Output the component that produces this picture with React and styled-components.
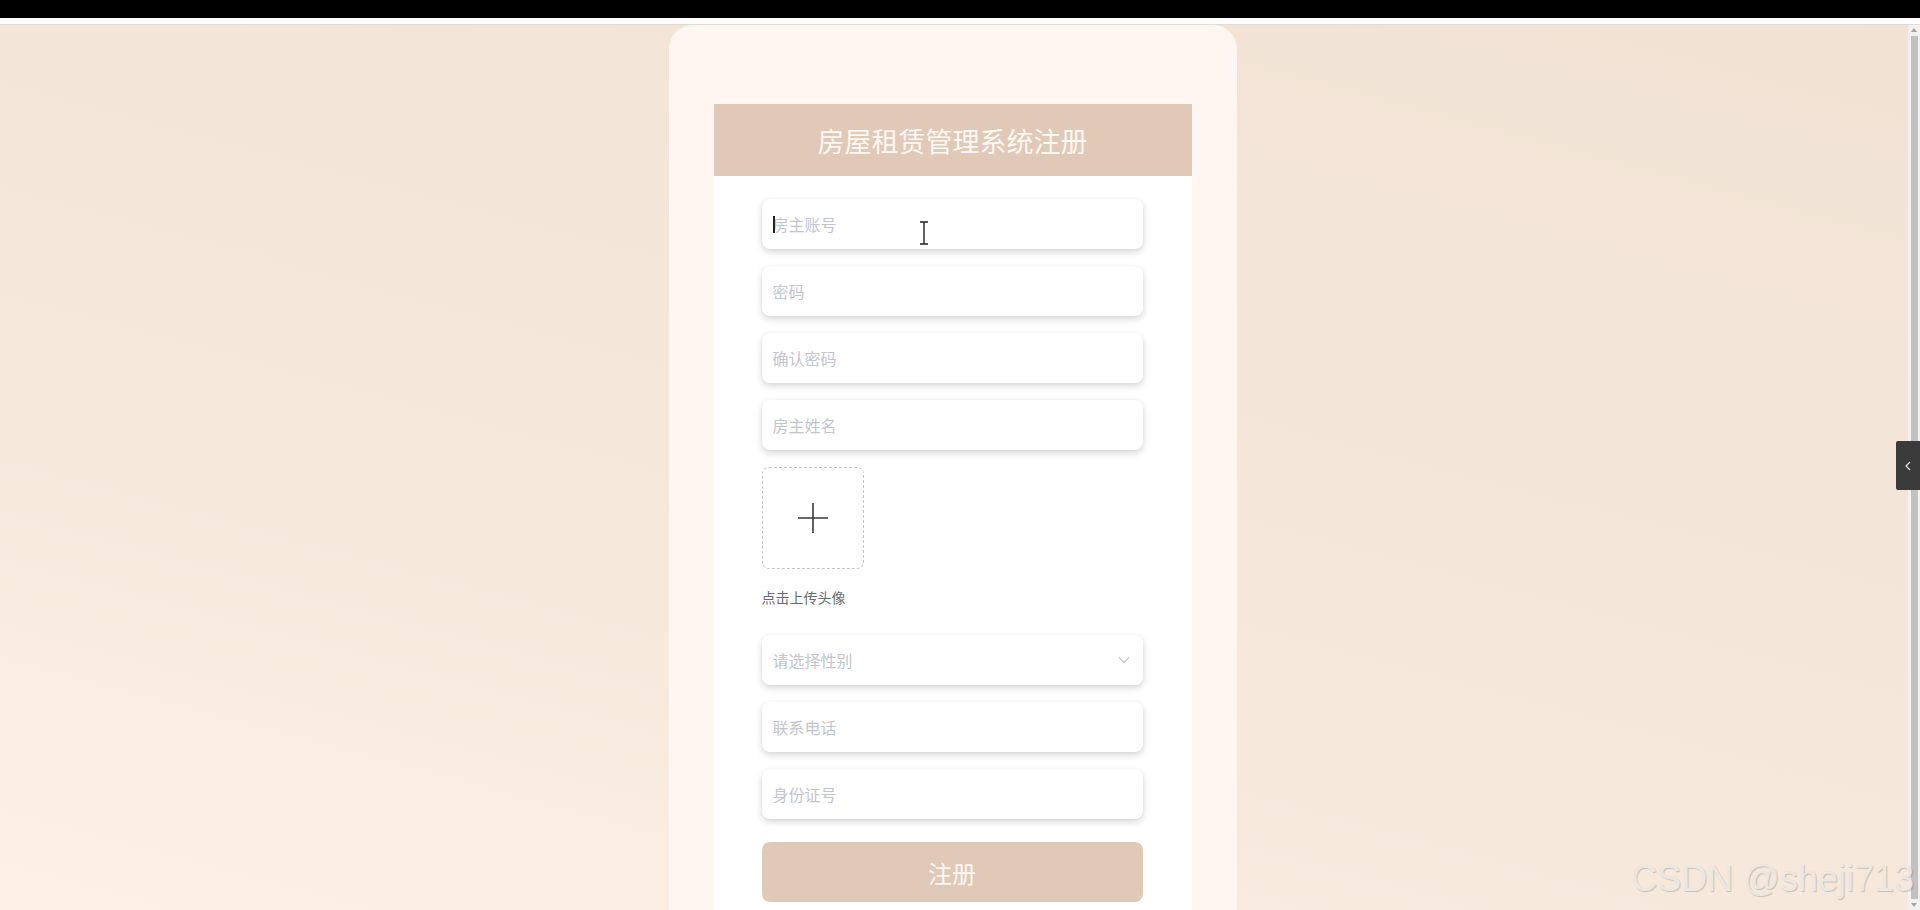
import React from "react";
import styled, { createGlobalStyle } from "styled-components";

const Global = createGlobalStyle`
  html, body { margin: 0; padding: 0; overflow: hidden; }
  body { font-family: "Noto Sans CJK SC", "Noto Sans", sans-serif; }
  * { box-sizing: border-box; }
`;

const Page = styled.div`
  position: relative;
  width: 1920px;
  height: 910px;
  display: flex;
  flex-direction: column;
  overflow: hidden;
`;

const TopBar = styled.div`
  height: 18px;
  background: #000;
  flex: none;
`;

const Strip = styled.div`
  height: 7px;
  background: #fdfdfd;
  border-bottom: 1px solid #e2dcd6;
  flex: none;
`;

const Body = styled.div`
  flex: 1;
  display: flex;
  min-height: 0;
`;

const Viewport = styled.div`
  flex: 1;
  display: flex;
  justify-content: center;
  align-items: flex-start;
  overflow: hidden;
  padding-right: 3px;
  background: linear-gradient(15deg, #fdf1e6 0%, #f6e8db 35%, #f3e5d8 65%, #f1e2d4 100%);
`;

const Card = styled.div`
  width: 568px;
  min-height: 940px;
  padding: 79px 45px 0;
  background: #fdf6f1;
  border-radius: 24px;
  display: flex;
  flex-direction: column;
`;

const Header = styled.div`
  height: 72px;
  background: #e0c9b6;
  display: flex;
  align-items: center;
  justify-content: center;
`;

const Title = styled.h1`
  margin: 0;
  font-size: 27px;
  font-weight: 400;
  color: #fdf8f3;
  font-family: "Noto Sans CJK SC", sans-serif;
`;

const Panel = styled.div`
  flex: 1;
  background: #fff;
  padding: 23px 49px 40px 48px;
  display: flex;
  flex-direction: column;
  gap: 17px;
`;

const Field = styled.div`
  position: relative;
  height: 50px;
  border-radius: 8px;
  background: #fff;
  box-shadow: 0 3px 7px rgba(0, 0, 0, 0.16), 0 0 3px rgba(0, 0, 0, 0.04);
  display: flex;
  align-items: center;
`;

const Input = styled.input`
  flex: 1;
  height: 100%;
  border: none;
  outline: none;
  background: transparent;
  padding: 0 11px;
  font-size: 16px;
  font-family: "Noto Sans CJK SC", sans-serif;
  color: #333;
  &::placeholder { color: #c3c5cc; }
`;

const Caret = styled.span`
  position: absolute;
  left: 11px;
  top: 17px;
  width: 2px;
  height: 17px;
  background: #222;
`;

const Pointer = styled.svg`
  position: absolute;
  left: 157px;
  top: 22px;
  pointer-events: none;
`;

const Chevron = styled.svg`
  margin-right: 13px;
  flex: none;
`;

const UploadGroup = styled.div`
  display: flex;
  flex-direction: column;
  align-items: flex-start;
  margin-bottom: 11px;
`;

const UploadBox = styled.div`
  width: 102px;
  height: 102px;
  border: 1px dashed #c0c4cc;
  border-radius: 7px;
  display: flex;
  align-items: center;
  justify-content: center;
  background: #fff;
`;

const Caption = styled.div`
  margin-top: 18px;
  font-size: 14px;
  line-height: 20px;
  color: #666b75;
  font-weight: 400;
`;

const Submit = styled.button`
  margin-top: 6px;
  height: 60px;
  border: none;
  border-radius: 8px;
  background: #e0c9b6;
  color: #fdf8f3;
  font-size: 24px;
  font-family: "Noto Sans CJK SC", sans-serif;
  cursor: pointer;
`;

const Scrollbar = styled.div`
  width: 12px;
  flex: none;
  background: #f1f1f1;
  display: flex;
  flex-direction: column;
  align-items: center;
  padding: 3px 0;
  gap: 4px;
`;

const Arrow = styled.div`
  width: 0;
  height: 0;
  border-left: 3px solid transparent;
  border-right: 3px solid transparent;
  ${(p) => (p.$down ? "border-top: 4px solid #a3a3a3;" : "border-bottom: 4px solid #a3a3a3;")}
`;

const Thumb = styled.div`
  flex: 1;
  width: 7px;
  background: #c1c1c1;
`;

const SideTab = styled.div`
  position: absolute;
  right: 0;
  top: 441px;
  width: 24px;
  height: 49px;
  background: #3b3b3b;
  border-radius: 2px 0 0 2px;
  display: flex;
  align-items: center;
  justify-content: center;
`;

const Watermark = styled.div`
  position: absolute;
  right: 6px;
  bottom: 13px;
  font-family: "Liberation Sans", Arial, sans-serif;
  font-size: 36px;
  line-height: 36px;
  color: #ebe7e3;
  text-shadow: 1px 1px 1px rgba(0, 0, 0, 0.18);
  white-space: nowrap;
`;

export default function App() {
  return (
    <Page>
      <Global />
      <TopBar />
      <Strip />
      <Body>
        <Viewport>
          <Card>
            <Header>
              <Title>房屋租赁管理系统注册</Title>
            </Header>
            <Panel>
              <Field>
                <Input placeholder="房主账号" />
                <Caret />
                <Pointer width="10" height="24" viewBox="0 0 10 24">
                  <path d="M1 1h8M5 1v22M1 23h8" stroke="#fff" strokeWidth="3" fill="none" />
                  <path d="M1 1h8M5 1v22M1 23h8" stroke="#222" strokeWidth="1.4" fill="none" />
                </Pointer>
              </Field>
              <Field>
                <Input type="password" placeholder="密码" />
              </Field>
              <Field>
                <Input type="password" placeholder="确认密码" />
              </Field>
              <Field>
                <Input placeholder="房主姓名" />
              </Field>
              <UploadGroup>
                <UploadBox>
                  <svg width="30" height="30" viewBox="0 0 30 30">
                    <path d="M15 0v30M0 15h30" stroke="#3a3a3a" strokeWidth="1.6" />
                  </svg>
                </UploadBox>
                <Caption>点击上传头像</Caption>
              </UploadGroup>
              <Field>
                <Input placeholder="请选择性别" readOnly />
                <Chevron width="12" height="8" viewBox="0 0 12 8">
                  <path d="M1 1.5l5 5 5-5" stroke="#c3c5cc" strokeWidth="1.3" fill="none" />
                </Chevron>
              </Field>
              <Field>
                <Input placeholder="联系电话" />
              </Field>
              <Field>
                <Input placeholder="身份证号" />
              </Field>
              <Submit>注册</Submit>
            </Panel>
          </Card>
        </Viewport>
        <Scrollbar>
          <Arrow />
          <Thumb />
          <Arrow $down />
        </Scrollbar>
      </Body>
      <SideTab>
        <svg width="6" height="10" viewBox="0 0 6 10">
          <path d="M5 1L1 5l4 4" stroke="#e0e0e0" strokeWidth="1.2" fill="none" />
        </svg>
      </SideTab>
      <Watermark>CSDN @sheji713</Watermark>
    </Page>
  );
}
